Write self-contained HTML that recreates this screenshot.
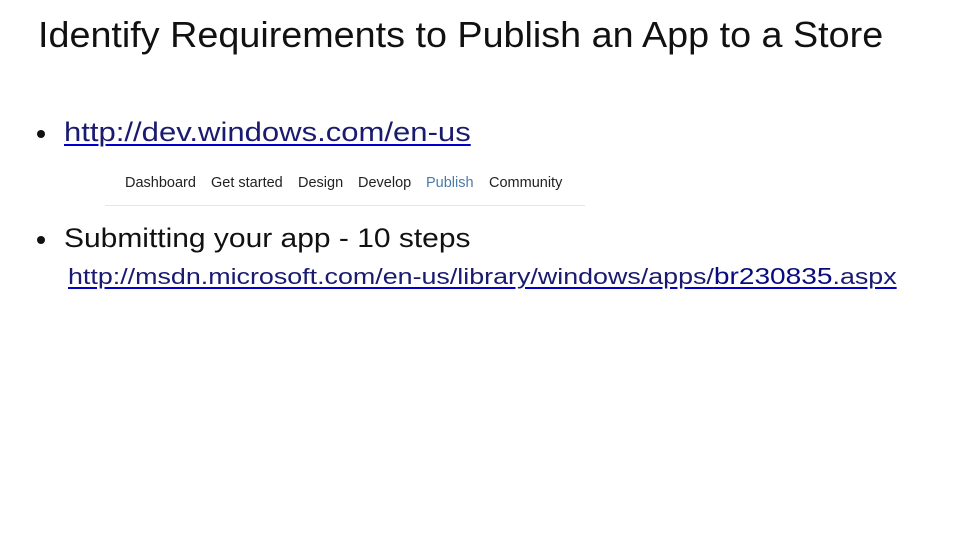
<!DOCTYPE html>
<html><head><meta charset="utf-8"><style>
body{margin:0;width:960px;height:540px;background:#fff;font-family:"Liberation Sans",sans-serif;position:relative;overflow:hidden}
.a{position:absolute;white-space:nowrap;transform-origin:0 0}
.t{left:38px;top:14px;font-size:36px;color:#111;transform:scaleX(1.048)}
.b{font-size:27px;color:#111}
.lk{color:#1a1a70;text-decoration:underline;text-decoration-color:#0000cc;text-decoration-thickness:2px;text-underline-offset:3px}
.dot{position:absolute;width:8px;height:8px;border-radius:50%;background:#111}
.nav{left:105px;top:165px;width:480px;height:40px;border-bottom:1px solid #e6e6e6;font-size:14.5px;color:#222}
.nav span{position:absolute;top:10px}
</style></head><body>
<div class="a t">Identify Requirements to Publish an App to a Store</div>
<div class="dot" style="left:37px;top:130px"></div>
<div class="a b lk" style="left:64px;top:117px;transform:scaleX(1.15)">http://dev.windows.com/en-us</div>
<div class="a nav">
<span style="left:20px">Dashboard</span>
<span style="left:106px">Get started</span>
<span style="left:193px">Design</span>
<span style="left:253px">Develop</span>
<span style="left:321px;color:#4a7aa8">Publish</span>
<span style="left:384px">Community</span>
</div>
<div class="dot" style="left:37px;top:236px"></div>
<div class="a b" style="left:64px;top:223px;transform:scaleX(1.11)">Submitting your app - 10 steps</div>
<div class="a lk" style="left:68px;top:263px;font-size:22px;transform:scaleX(1.22)">http://msdn.microsoft.com/en-us/library/windows/apps/<b style="color:#0a0a80;font-weight:normal;font-size:23px">br230835</b>.aspx</div>
</body></html>
